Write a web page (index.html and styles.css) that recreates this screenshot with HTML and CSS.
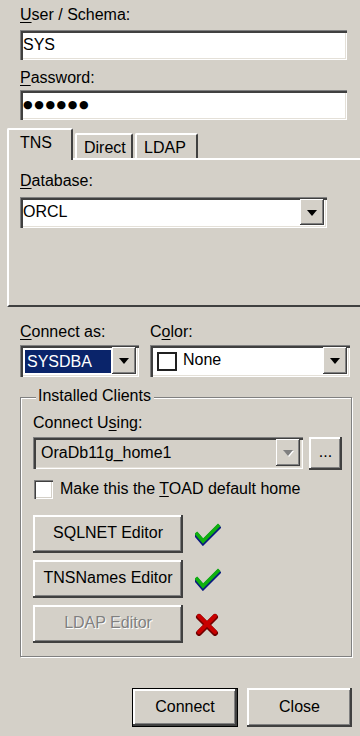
FILE: index.html
```html
<!DOCTYPE html>
<html>
<head>
<meta charset="utf-8">
<link rel="stylesheet" href="styles.css">
</head>
<body>
<div class="dlg">
  <div class="fields">
    <div class="lbl lbl-user"><u>U</u>ser / Schema:</div>
    <div class="edit">SYS</div>
    <div class="lbl lbl-pw"><u>P</u>assword:</div>
    <div class="edit pw">●●●●●●</div>
  </div>

  <div class="tabs">
    <div class="tab sel">TNS</div>
    <div class="tab t-direct">Direct</div>
    <div class="tab t-ldap">LDAP</div>
  </div>
  <div class="panel">
    <div class="lbl"><u>D</u>atabase:</div>
    <div class="combo db">
      <span class="val">ORCL</span>
      <span class="ddbtn"><i class="arrow"></i></span>
    </div>
  </div>

  <div class="row2">
    <div class="col col-as">
      <div class="lbl"><u>C</u>onnect as:</div>
      <div class="combo as">
        <span class="val selv">SYSDBA</span>
        <span class="ddbtn"><i class="arrow"></i></span>
      </div>
    </div>
    <div class="col col-color">
      <div class="lbl">C<u>o</u>lor:</div>
      <div class="combo color">
        <span class="swatch"></span>
        <span class="val">None</span>
        <span class="ddbtn"><i class="arrow"></i></span>
      </div>
    </div>
  </div>

  <div class="group">
    <div class="legend">Installed Clients</div>
    <div class="lbl using-lbl">Connect U<u>s</u>ing:</div>
    <div class="using-row">
      <div class="combo using disabled">
        <span class="val">OraDb11g_home1</span>
        <span class="ddbtn"><i class="arrow dis"></i></span>
      </div>
      <div class="btn dots">...</div>
    </div>
    <div class="chk-row">
      <span class="chk"></span>
      <span class="chk-text">Make this the <u>T</u>OAD default home</span>
    </div>
    <div class="ed-row first">
      <div class="btn ed">SQLNET Editor</div>
      <svg class="mark" width="26" height="24" viewBox="0 0 26 24"><polyline points="2,12 8,19 23,4" fill="none" stroke="#0a1a80" stroke-width="5" stroke-linecap="square" transform="translate(0,1.5)"/><polyline points="2,12 8,19 23,4" fill="none" stroke="#10b010" stroke-width="3.6" stroke-linecap="square"/></svg>
    </div>
    <div class="ed-row">
      <div class="btn ed">TNSNames Editor</div>
      <svg class="mark" width="26" height="24" viewBox="0 0 26 24"><polyline points="2,12 8,19 23,4" fill="none" stroke="#0a1a80" stroke-width="5" stroke-linecap="square" transform="translate(0,1.5)"/><polyline points="2,12 8,19 23,4" fill="none" stroke="#10b010" stroke-width="3.6" stroke-linecap="square"/></svg>
    </div>
    <div class="ed-row">
      <div class="btn ed disabled-txt">LDAP Editor</div>
      <svg class="mark" width="26" height="24" viewBox="0 0 26 24"><g transform="translate(0,1)"><path d="M4,4 L20,20 M20,4 L4,20" stroke="#700000" stroke-width="6" stroke-linecap="round"/></g><path d="M4,4 L20,20 M20,4 L4,20" stroke="#c80000" stroke-width="4" stroke-linecap="round"/></svg>
    </div>
  </div>

  <div class="footer">
    <div class="btn fbtn def">Connect</div>
    <div class="btn fbtn">Close</div>
  </div>
</div>
</body>
</html>
```

FILE: styles.css
```css
html, body {
  margin: 0;
  padding: 0;
  background: #d4d0c8;
  width: 360px;
  height: 736px;
  overflow: hidden;
}
.dlg {
  font-family: "Liberation Sans", Arial, sans-serif;
  font-size: 16px;
  line-height: 20px;
  color: #000;
  width: 360px;
  height: 736px;
}
u { text-decoration: underline; text-underline-offset: 2px; }

.lbl {
  line-height: 20px;
  height: 20px;
  white-space: nowrap;
}
.fields { padding-left: 20px; }
.lbl-user { padding-top: 5px; margin-bottom: 5px; }
.lbl-pw { margin-top: 8px; margin-bottom: 2px; }

.edit {
  width: 327px;
  height: 30px;
  box-sizing: border-box;
  background: #fff;
  line-height: 30px;
  padding-left: 3px;
  box-shadow: inset 1px 1px 0 #808080, inset 3px 3px 0 #404040,
              inset -1px -1px 0 #fff, inset -2px -2px 0 #e4e0d8;
}
.pw {
  font-family: "DejaVu Sans", sans-serif;
  font-size: 11px;
  letter-spacing: 1.6px;
  padding-left: 3px;
}

/* tabs */
.tabs {
  display: flex;
  align-items: flex-end;
  margin-top: 8px;
  margin-left: 7px;
  height: 30px;
}
.tab {
  box-sizing: border-box;
  height: 25px;
  line-height: 20px;
  padding-top: 3px;
  padding-left: 7px;
  border-top: 2px solid #fff;
  border-left: 2px solid #fff;
  border-right: 2px solid #404040;
  border-radius: 2px 2px 0 0;
  margin-right: 2px;
  background: #d4d0c8;
}
.tab.sel {
  width: 66px;
  height: 32px;
  margin-bottom: -2px;
  padding-top: 3px;
  padding-left: 11px;
  position: relative;
  z-index: 2;
}
.t-direct { width: 58px; }
.t-ldap { width: 63px; }

.panel {
  margin-left: 7px;
  width: 360px;
  height: 149px;
  box-sizing: border-box;
  border-top: 2px solid #fff;
  border-left: 2px solid #fff;
  border-bottom: 2px solid #404040;
  padding-left: 11px;
  padding-top: 11px;
  position: relative;
  z-index: 1;
}
.panel .lbl { margin-bottom: 6px; }

/* combos */
.combo {
  display: flex;
  align-items: stretch;
  box-sizing: border-box;
  background: #fff;
  height: 31px;
  padding: 2px 3px 3px 3px;
  box-shadow: inset 1px 1px 0 #808080, inset 3px 3px 0 #404040,
              inset -1px -1px 0 #fff, inset -2px -2px 0 #e4e0d8;
}
.combo .val {
  flex: 1;
  line-height: 26px;
  white-space: nowrap;
  overflow: hidden;
}
.combo.db { width: 307px; }
.ddbtn {
  width: 24px;
  flex: none;
  display: flex;
  align-items: center;
  justify-content: center;
  background: #d4d0c8;
  box-shadow: inset -1px -1px 0 #404040, inset 1px 1px 0 #fff, inset -2px -2px 0 #808080;
}
.arrow {
  display: block;
  width: 0;
  height: 0;
  border-left: 5.5px solid transparent;
  border-right: 5.5px solid transparent;
  border-top: 6px solid #000;
  margin-top: 1px;
}
.arrow.dis {
  border-top-color: #808080;
  filter: drop-shadow(1px 1px 0 #fff);
}

.row2 {
  display: flex;
  gap: 11px;
  padding-left: 20px;
  margin-top: 15px;
}
.row2 .lbl { margin-bottom: 3px; }
.combo.as { width: 119px; height: 32px; }
.combo.as .val.selv {
  background: #0a246a;
  color: #fff;
  margin: 3px 1px 1px 2px;
  line-height: 23px;
  padding-left: 2px;
}
.combo.color { width: 200px; height: 32px; }
.swatch {
  width: 20px;
  height: 19px;
  flex: none;
  box-sizing: border-box;
  border: 2px solid #202020;
  background: #fff;
  align-self: center;
  margin: 2px 6px 0 4px;
}

/* group */
.group {
  margin-top: 20px;
  margin-left: 20px;
  width: 332px;
  height: 260px;
  box-sizing: border-box;
  border: 1px solid #808080;
  box-shadow: 1px 1px 0 #fff, inset 1px 1px 0 #fff;
  padding-left: 12px;
}
.legend {
  width: fit-content;
  margin-top: -12px;
  margin-left: 3px;
  padding: 0 3px 0 2px;
  height: 20px;
  line-height: 20px;
  background: #d4d0c8;
}
.using-lbl { margin-top: 7px; margin-bottom: 4px; }
.using-row {
  display: flex;
  gap: 6px;
}
.combo.using { width: 270px; height: 32px; }
.combo.disabled { background: #d4d0c8; }
.combo.using .val { padding-left: 5px; line-height: 27px; }

.btn {
  box-sizing: border-box;
  background: #d4d0c8;
  text-align: center;
  white-space: nowrap;
  box-shadow: inset -2px -2px 0 #404040, inset 2px 2px 0 #fff, inset -3px -3px 0 #808080;
}
.dots {
  width: 33px;
  height: 33px;
  line-height: 30px;
}

.chk-row {
  display: flex;
  align-items: center;
  height: 20px;
  margin-top: 9px;
}
.chk {
  width: 19px;
  height: 19px;
  box-sizing: border-box;
  background: #fff;
  margin-left: 1px;
  box-shadow: inset 1px 1px 0 #808080, inset 2px 2px 0 #404040,
              inset -1px -1px 0 #fff, inset -2px -2px 0 #d4d0c8;
}
.chk-text { margin-left: 7px; line-height: 20px; }

.ed-row {
  display: flex;
  align-items: center;
  margin-top: 7px;
}
.ed-row.first { margin-top: 16px; }
.ed {
  width: 150px;
  height: 38px;
  line-height: 36px;
}
.mark { margin-left: 12px; }
.disabled-txt {
  color: #808080;
  text-shadow: 1px 1px 0 #fff;
}

.footer {
  display: flex;
  justify-content: flex-end;
  gap: 9px;
  padding-right: 8px;
  margin-top: 31px;
}
.fbtn {
  width: 105px;
  height: 39px;
  line-height: 38px;
}
.fbtn.def {
  width: 106px;
  box-shadow: inset 0 0 0 1px #000, inset -3px -3px 0 #404040, inset 3px 3px 0 #fff, inset -4px -4px 0 #808080;
}
```
